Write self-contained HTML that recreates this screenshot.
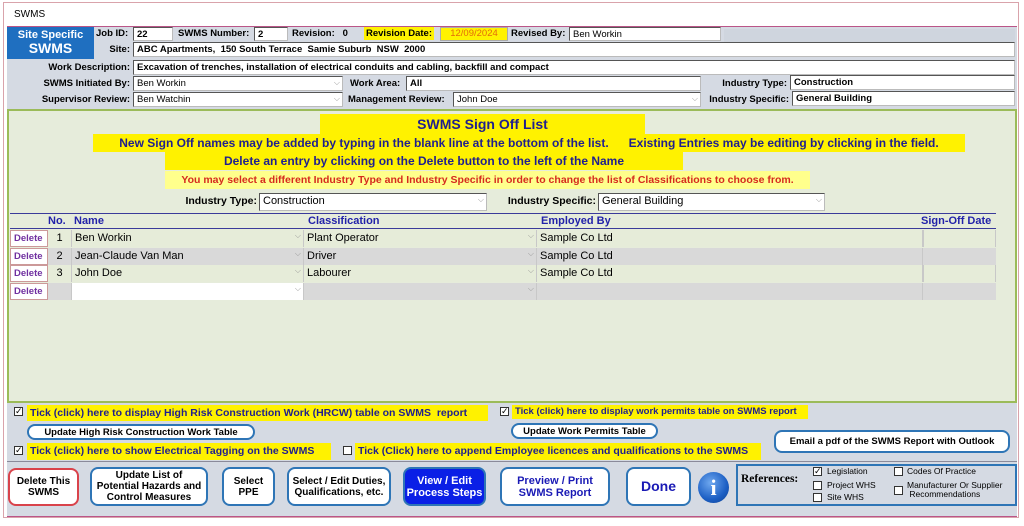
<!DOCTYPE html>
<html><head><meta charset="utf-8"><style>
*{box-sizing:border-box;margin:0;padding:0}
body{width:1024px;height:526px;background:#fff;position:relative;overflow:hidden;font-family:"Liberation Sans",sans-serif;font-size:10px;color:#000}
.a{position:absolute;white-space:nowrap}
.lb{font-weight:bold;font-size:9.5px;text-align:right}
.f{background:#fff;border:1px solid #555;border-right-color:#bbb;border-bottom-color:#bbb;padding:1px 3px;font-size:9.5px;overflow:hidden}
.fb{font-weight:bold}
.dd{position:absolute;right:2px;top:1px;color:#999;font-size:8px}
.y{background:#fff200}
.btn{position:absolute;background:#fff;border:2px solid #2e75b6;border-radius:8px;text-align:center;font-weight:bold;font-size:10px;display:flex;align-items:center;justify-content:center;line-height:11px}
.row{position:absolute;left:10px;width:986px;height:17px;font-size:11px}
.row div{position:absolute;top:0;height:17px;padding:2px 3px;border-right:1px solid #c8c8c8}
.del{left:0;width:38px;background:#fff;color:#7030a0;font-weight:bold;font-size:9.5px;border:1px solid #c99!important}
.cb{position:absolute;width:9px;height:9px;border:1px solid #333;background:#fff;font-size:9px;line-height:7px;text-align:center}
</style></head><body>
<div class="a" style="left:3px;top:2px;width:1016px;height:516px;border:1px solid #d9a3ab;"></div>
<div class="a" style="left:14px;top:9px;font-size:10px">SWMS</div>
<div class="a" style="left:7px;top:26px;width:1010px;height:83px;background:#d5dae3;border-top:1px solid #b58;"></div>
<div class="a" style="left:7px;top:27px;width:87px;height:32px;background:#1f6fc0;color:#fff;font-weight:bold;text-align:center;font-size:11px;line-height:13px;padding-top:2px">Site Specific<br><span style="font-size:14px">SWMS</span></div>
<div class="a lb" style="left:96px;top:28px">Job ID:</div>
<div class="a f fb" style="left:133px;top:27px;width:40px;height:14px">22</div>
<div class="a lb" style="left:178px;top:28px">SWMS Number:</div>
<div class="a f fb" style="left:254px;top:27px;width:34px;height:14px">2</div>
<div class="a lb" style="left:292px;top:28px">Revision:&nbsp;&nbsp; 0</div>
<div class="a lb y" style="left:364px;top:27px;padding:1px 2px">Revision Date:</div>
<div class="a y" style="left:440px;top:27px;width:68px;height:14px;color:#e46c0a;text-align:center;border:1px solid #aaa;font-size:9.5px">12/09/2024</div>
<div class="a lb" style="left:511px;top:28px">Revised By:</div>
<div class="a f" style="left:569px;top:27px;width:152px;height:14px">Ben Workin</div>
<div class="a" style="left:724px;top:29px;width:291px;height:14px;background:#cfd5de;border-bottom:1px solid #888"></div>
<div class="a lb" style="left:60px;top:44px;width:70px">Site:</div>
<div class="a f fb" style="left:133px;top:42px;width:882px;height:15px">ABC Apartments,&nbsp; 150 South Terrace&nbsp; Samie Suburb&nbsp; NSW&nbsp; 2000</div>
<div class="a lb" style="left:10px;top:62px;width:120px">Work Description:</div>
<div class="a f fb" style="left:133px;top:60px;width:882px;height:15px">Excavation of trenches, installation of electrical conduits and cabling, backfill and compact</div>
<div class="a lb" style="left:10px;top:78px;width:120px">SWMS Initiated By:</div>
<div class="a f" style="left:133px;top:76px;width:210px;height:15px">Ben Workin<span class="dd">⌵</span></div>
<div class="a lb" style="left:350px;top:78px">Work Area:</div>
<div class="a f fb" style="left:406px;top:76px;width:295px;height:15px">All</div>
<div class="a lb" style="left:700px;top:78px;width:87px">Industry Type:</div>
<div class="a f fb" style="left:790px;top:75px;width:225px;height:15px">Construction</div>
<div class="a lb" style="left:10px;top:94px;width:120px">Supervisor Review:</div>
<div class="a f" style="left:133px;top:92px;width:210px;height:15px">Ben Watchin<span class="dd">⌵</span></div>
<div class="a lb" style="left:348px;top:94px">Management Review:</div>
<div class="a f" style="left:453px;top:92px;width:248px;height:15px">John Doe<span class="dd">⌵</span></div>
<div class="a lb" style="left:700px;top:94px;width:89px">Industry Specific:</div>
<div class="a f fb" style="left:792px;top:91px;width:223px;height:15px">General Building</div>
<div class="a" style="left:7px;top:109px;width:1010px;height:294px;background:#e6ecdb;border:2px solid #9bbb59"></div>
<div class="a y" style="left:320px;top:114px;width:325px;height:20px;text-align:center;color:#1f1f8f;font-weight:bold;font-size:14px;line-height:20px">SWMS Sign Off List</div>
<div class="a y" style="left:93px;top:134px;width:872px;height:18px;text-align:center;color:#1f1f8f;font-weight:bold;font-size:12px;line-height:18px">New Sign Off names may be added by typing in the blank line at the bottom of the list.&nbsp;&nbsp;&nbsp;&nbsp;&nbsp; Existing Entries may be editing by clicking in the field.</div>
<div class="a y" style="left:165px;top:152px;width:518px;height:18px;text-align:center;color:#1f1f8f;font-weight:bold;font-size:12px;line-height:18px">Delete an entry by clicking on the Delete button to the left of the Name</div>
<div class="a" style="left:165px;top:171px;width:645px;height:18px;background:#ffff8c;text-align:center;color:#d52b1e;font-weight:bold;font-size:10.5px;line-height:18px">You may select a different Industry Type and Industry Specific in order to change the list of Classifications to choose from.</div>
<div class="a lb" style="left:160px;top:195px;width:97px;font-size:10.5px">Industry Type:</div>
<div class="a f" style="left:259px;top:193px;width:228px;height:18px;font-size:11px">Construction<span class="dd">⌵</span></div>
<div class="a lb" style="left:490px;top:195px;width:106px;font-size:10.5px">Industry Specific:</div>
<div class="a f" style="left:598px;top:193px;width:227px;height:18px;font-size:11px">General Building<span class="dd">⌵</span></div>
<div class="a" style="left:10px;top:213px;width:986px;height:1px;background:#3a3a9a"></div>
<div class="a" style="left:10px;top:228px;width:986px;height:1px;background:#3a3a9a"></div>
<div class="a" style="left:48px;top:215px;color:#2222aa;font-weight:bold;font-size:11px">No.</div>
<div class="a" style="left:74px;top:215px;color:#2222aa;font-weight:bold;font-size:11px">Name</div>
<div class="a" style="left:308px;top:215px;color:#2222aa;font-weight:bold;font-size:11px">Classification</div>
<div class="a" style="left:541px;top:215px;color:#2222aa;font-weight:bold;font-size:11px">Employed By</div>
<div class="a" style="left:921px;top:215px;color:#2222aa;font-weight:bold;font-size:11px">Sign-Off Date</div>
<div class="row" style="top:230px;background:#e6ecd9"><div class="del">Delete</div><div style="left:38px;width:24px;text-align:center">1</div><div style="left:62px;width:232px">Ben Workin<span class="dd">⌵</span></div><div style="left:294px;width:233px">Plant Operator<span class="dd">⌵</span></div><div style="left:527px;width:386px">Sample Co Ltd</div><div style="left:913px;width:73px;border-left:1px solid #c8c8c8"></div></div>
<div class="row" style="top:248px;background:#d9d9d9"><div class="del">Delete</div><div style="left:38px;width:24px;text-align:center">2</div><div style="left:62px;width:232px">Jean-Claude Van Man<span class="dd">⌵</span></div><div style="left:294px;width:233px">Driver<span class="dd">⌵</span></div><div style="left:527px;width:386px">Sample Co Ltd</div></div>
<div class="row" style="top:265px;background:#e6ecd9"><div class="del">Delete</div><div style="left:38px;width:24px;text-align:center">3</div><div style="left:62px;width:232px">John Doe<span class="dd">⌵</span></div><div style="left:294px;width:233px">Labourer<span class="dd">⌵</span></div><div style="left:527px;width:386px">Sample Co Ltd</div><div style="left:913px;width:73px;border-left:1px solid #c8c8c8"></div></div>
<div class="row" style="top:283px;background:#d9d9d9"><div class="del">Delete</div><div style="left:38px;width:24px"></div><div style="left:62px;width:232px;background:#fff"><span class="dd">⌵</span></div><div style="left:294px;width:233px"><span class="dd">⌵</span></div><div style="left:527px;width:386px"></div></div>
<div class="a" style="left:7px;top:403px;width:1010px;height:114px;background:#d5dae3;border-bottom:1px solid #b58"></div>
<div class="cb" style="left:14px;top:407px">✓</div>
<div class="a y" style="left:27px;top:405px;width:461px;height:16px;color:#1f1f8f;font-weight:bold;font-size:10.5px;padding:2px 3px">Tick (click) here to display High Risk Construction Work (HRCW) table on SWMS&nbsp; report</div>
<div class="cb" style="left:500px;top:407px">✓</div>
<div class="a y" style="left:512px;top:405px;width:296px;height:14px;color:#1f1f8f;font-weight:bold;font-size:9.5px;padding:1px 3px">Tick (click) here to display work permits table on SWMS report</div>
<div class="btn" style="left:27px;top:424px;width:228px;height:16px;font-size:9.5px">Update High Risk Construction Work Table</div>
<div class="btn" style="left:511px;top:423px;width:147px;height:16px;font-size:9.5px">Update Work Permits Table</div>
<div class="btn" style="left:774px;top:430px;width:236px;height:23px;font-size:9.5px">Email a pdf of the SWMS Report with Outlook</div>
<div class="cb" style="left:14px;top:446px">✓</div>
<div class="a y" style="left:27px;top:443px;width:304px;height:17px;color:#1f1f8f;font-weight:bold;font-size:10.5px;padding:2px 3px">Tick (click) here to show Electrical Tagging on the SWMS</div>
<div class="cb" style="left:343px;top:446px"></div>
<div class="a y" style="left:355px;top:443px;width:406px;height:17px;color:#1f1f8f;font-weight:bold;font-size:10.5px;padding:2px 3px">Tick (Click) here to append Employee licences and qualifications to the SWMS</div>
<div class="a" style="left:7px;top:461px;width:1010px;height:1px;background:#8a8a9a"></div>
<div class="btn" style="left:8px;top:468px;width:71px;height:38px;border-color:#d9434b">Delete This<br>SWMS</div>
<div class="btn" style="left:90px;top:467px;width:118px;height:39px">Update List of<br>Potential Hazards and<br>Control Measures</div>
<div class="btn" style="left:222px;top:467px;width:53px;height:39px">Select<br>PPE</div>
<div class="btn" style="left:287px;top:467px;width:104px;height:39px">Select / Edit Duties,<br>Qualifications, etc.</div>
<div class="btn" style="left:403px;top:467px;width:83px;height:39px;background:#0a1fe6;color:#fff;font-size:11px;line-height:12px;border-color:#2e75b6">View / Edit<br>Process Steps</div>
<div class="btn" style="left:500px;top:467px;width:110px;height:39px;color:#1a1ab5;font-size:11px;line-height:12px">Preview / Print<br>SWMS Report</div>
<div class="btn" style="left:626px;top:467px;width:65px;height:39px;color:#1a1ab5;font-size:14px">Done</div>
<div class="a" style="left:698px;top:472px;width:31px;height:31px;border-radius:50%;background:radial-gradient(circle at 40% 35%,#6fa8ef,#1c5fc4 60%,#0d3f8f);color:#fff;font-family:'Liberation Serif',serif;font-weight:bold;font-size:22px;text-align:center;line-height:31px">i</div>
<div class="a" style="left:736px;top:464px;width:281px;height:42px;border:2px solid #2e75b6;background:#d5dae3"></div>
<div class="a" style="left:741px;top:473px;font-weight:bold;font-size:11.5px;font-family:'Liberation Serif',serif">References:</div>
<div class="cb" style="left:813px;top:467px">✓</div><div class="a" style="left:827px;top:466px;font-size:8.5px">Legislation</div>
<div class="cb" style="left:813px;top:481px"></div><div class="a" style="left:827px;top:480px;font-size:8.5px">Project WHS</div>
<div class="cb" style="left:813px;top:493px"></div><div class="a" style="left:827px;top:492px;font-size:8.5px">Site WHS</div>
<div class="cb" style="left:894px;top:467px"></div><div class="a" style="left:907px;top:466px;font-size:8.5px">Codes Of Practice</div>
<div class="cb" style="left:894px;top:486px"></div><div class="a" style="left:907px;top:481px;font-size:8.5px;line-height:9px">Manufacturer Or Supplier<br>&nbsp;Recommendations</div>
</body></html>
